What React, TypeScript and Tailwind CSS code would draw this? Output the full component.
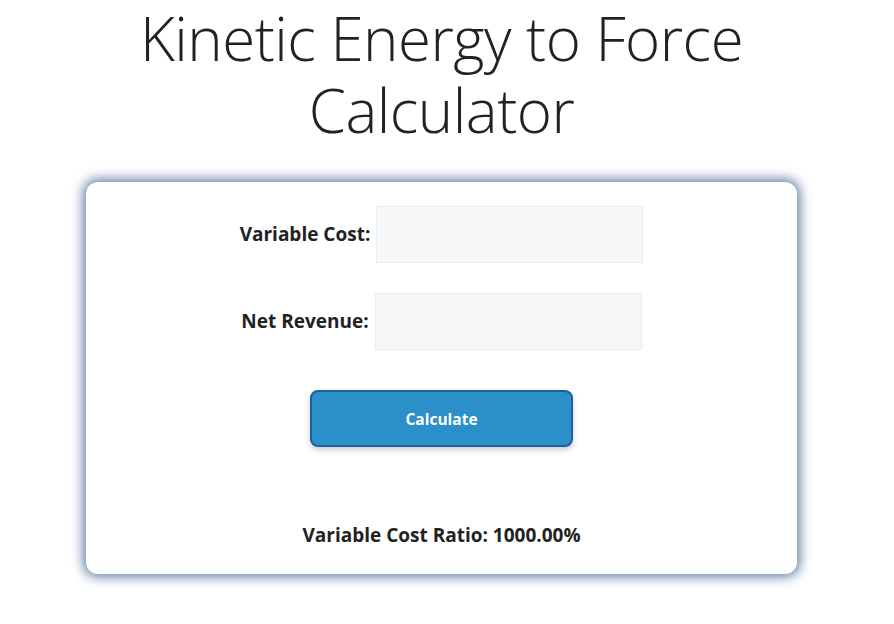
import React, { useState } from "react";

export default function App() {
    const [cost, setCost] = useState("");
    const [revenue, setRevenue] = useState("");
    const [ratio, setRatio] = useState("1000.00");

    const calculate = () => {
        const c = parseFloat(cost);
        const r = parseFloat(revenue);
        if (!isNaN(c) && !isNaN(r) && r !== 0) {
            setRatio(((c / r) * 100).toFixed(2));
        }
    };

    return (
        <div className="min-h-screen w-[883px] bg-white text-[#222] font-['Open_Sans','Noto_Sans',sans-serif]">
            <h1 className="pt-[2px] text-center text-[60px] leading-[72px] font-light tracking-[-0.5px]">
                Kinetic Energy to Force
                <br />
                Calculator
            </h1>

            <div className="mx-auto mt-[36px] w-[711px] rounded-xl bg-white px-6 pt-6 pb-[24px] shadow-[0_0_12px_3px_rgba(60,95,145,0.8)]">
                <div className="flex items-center justify-center gap-[6px]">
                    <label className="text-[19px] font-bold">Variable Cost:</label>
                    <input
                        value={cost}
                        onChange={(e) => setCost(e.target.value)}
                        className="h-[57px] w-[267px] border border-[#ececec] bg-[#f6f7f9] px-3 outline-none"
                    />
                </div>

                <div className="mt-[30px] flex items-center justify-center gap-[6px]">
                    <label className="text-[19px] font-bold">Net Revenue:</label>
                    <input
                        value={revenue}
                        onChange={(e) => setRevenue(e.target.value)}
                        className="h-[57px] w-[267px] border border-[#ececec] bg-[#f6f7f9] px-3 outline-none"
                    />
                </div>

                <div className="mt-[40px] flex justify-center">
                    <button
                        onClick={calculate}
                        className="h-[57px] w-[263px] rounded-lg border-2 border-[#1c5fa3] bg-[#2b8fc9] pt-[3px] text-[15.5px] font-bold text-white shadow-[0_3px_6px_rgba(0,0,0,0.2)]"
                    >
                        Calculate
                    </button>
                </div>

                <p className="mt-[74px] text-center text-[19px] font-bold">
                    Variable Cost Ratio: {ratio}%
                </p>
            </div>
        </div>
    );
}
